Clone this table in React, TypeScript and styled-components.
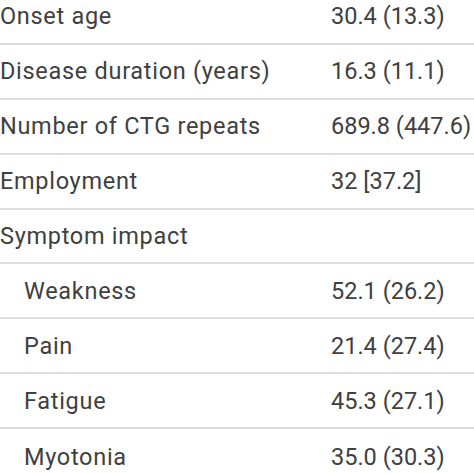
import React from "react";
import styled, { createGlobalStyle } from "styled-components";

const Global = createGlobalStyle`
  html, body { margin: 0; padding: 0; background: #ffffff; overflow: hidden; }
  body { font-family: Roboto, "Liberation Sans", sans-serif; }
`;

const Table = styled.div`
  display: flex;
  flex-direction: column;
  margin-top: -10px;
  width: 474px;
`;

const Row = styled.div`
  display: grid;
  grid-template-columns: 331px 1fr;
  align-items: center;
  height: 54.9px;
  box-sizing: border-box;
  border-bottom: 2px solid #dddddd;
  font-size: 23.5px;
  color: #404040;
  &:last-child { border-bottom: none; }
`;

const Label = styled.div<{ $indent?: boolean }>`
  padding-left: ${(p) => (p.$indent ? "24px" : "0")};
  letter-spacing: 0.7px;
  white-space: nowrap;
`;

const Value = styled.div`
  white-space: nowrap;
`;

const rows: { label: string; value: string; indent?: boolean }[] = [
  { label: "Onset age", value: "30.4 (13.3)" },
  { label: "Disease duration (years)", value: "16.3 (11.1)" },
  { label: "Number of CTG repeats", value: "689.8 (447.6)" },
  { label: "Employment", value: "32 [37.2]" },
  { label: "Symptom impact", value: "" },
  { label: "Weakness", value: "52.1 (26.2)", indent: true },
  { label: "Pain", value: "21.4 (27.4)", indent: true },
  { label: "Fatigue", value: "45.3 (27.1)", indent: true },
  { label: "Myotonia", value: "35.0 (30.3)", indent: true },
];

export default function App() {
  return (
    <>
      <Global />
      <Table>
        {rows.map((r) => (
          <Row key={r.label}>
            <Label $indent={r.indent}>{r.label}</Label>
            <Value>{r.value}</Value>
          </Row>
        ))}
      </Table>
    </>
  );
}
